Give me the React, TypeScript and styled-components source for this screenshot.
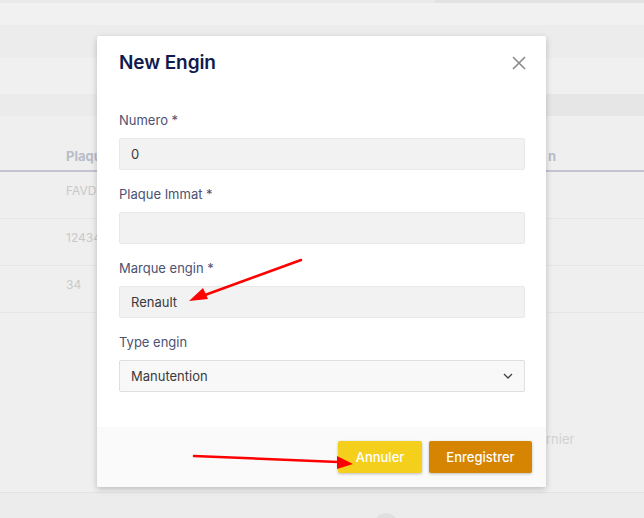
import React from "react";
import styled, { createGlobalStyle } from "styled-components";

const Global = createGlobalStyle`
  html, body { margin: 0; padding: 0; }
  body { font-family: "Inter", "Noto Sans", sans-serif; background: #efefef; }
  * { box-sizing: border-box; }
`;

const Page = styled.div`
  position: relative;
  width: 644px;
  height: 518px;
  overflow: hidden;
  background: #efefef;
  display: flex;
  flex-direction: column;
`;

const Band = styled.div<{ $h: number; $bg: string }>`
  height: ${(p) => p.$h}px;
  background: ${(p) => p.$bg};
  flex: none;
  display: flex;
  justify-content: flex-end;
`;

const BandRight = styled.div<{ $w: number; $bg: string }>`
  width: ${(p) => p.$w}px;
  background: ${(p) => p.$bg};
`;

const Table = styled.div`
  margin-top: 22px;
  display: flex;
  flex-direction: column;
`;

const HeadRow = styled.div`
  height: 34px;
  border-bottom: 2px solid #c3c4d0;
  display: flex;
  align-items: center;
  font-size: 13px;
  font-weight: 700;
  color: #b8bcc8;
  padding: 3px 88px 0 66px;
  justify-content: space-between;
`;

const Row = styled.div`
  height: 47px;
  border-bottom: 1px solid #e6e6e6;
  display: flex;
  align-items: flex-start;
  padding: 11px 0 0 66px;
  font-size: 12px;
  color: #c9c9c9;
`;

const Spacer = styled.div`
  flex: 1;
  position: relative;
`;

const Ghost = styled.div`
  position: absolute;
  left: 546px;
  top: 118px;
  font-size: 13px;
  color: #d2d2d2;
`;

const BottomBar = styled.div`
  height: 26px;
  border-top: 1px solid #e2e2e2;
  background: #ececec;
  position: relative;
  flex: none;
`;

const Knob = styled.div`
  position: absolute;
  left: 374px;
  top: 20px;
  width: 24px;
  height: 24px;
  border-radius: 50%;
  background: #e0e0e0;
`;

const Modal = styled.div`
  position: absolute;
  left: 97px;
  top: 36px;
  width: 449px;
  height: 451px;
  background: #fff;
  border-radius: 2px;
  box-shadow: 0 2px 6px rgba(0, 0, 0, 0.22);
  display: flex;
  flex-direction: column;
`;

const Header = styled.div`
  display: flex;
  align-items: center;
  justify-content: space-between;
  padding: 0 19px 0 22px;
  height: 53px;
  flex: none;
`;

const Title = styled.h2`
  margin: 0;
  font-size: 19px;
  font-weight: 600;
  color: #111a4d;
  letter-spacing: -0.1px;
`;

const Close = styled.button`
  border: 0;
  background: none;
  padding: 0;
  width: 16px;
  height: 16px;
  display: flex;
  cursor: pointer;
`;

const Body = styled.div`
  flex: 1;
  padding: 23px 21px 0 22px;
  display: flex;
  flex-direction: column;
`;

const Field = styled.div`
  display: flex;
  flex-direction: column;
  margin-bottom: 16px;
`;

const Label = styled.label`
  font-size: 13px;
  line-height: 16px;
  color: #4b5273;
  margin-bottom: 10px;
`;

const Input = styled.div<{ $select?: boolean }>`
  height: 32px;
  background: ${(p) => (p.$select ? "#f8f8f8" : "#f2f2f2")};
  border: 1px solid ${(p) => (p.$select ? "#dfdfe3" : "#e8e8e8")};
  border-radius: 2px;
  display: flex;
  align-items: center;
  justify-content: space-between;
  padding: 0 10px 0 11px;
  font-size: 13px;
  color: #3a3a3a;
`;

const Footer = styled.div`
  height: 60px;
  background: #fafafa;
  display: flex;
  align-items: center;
  justify-content: flex-end;
  gap: 7px;
  padding: 0 14px 0 0;
  border-bottom-left-radius: 2px;
  border-bottom-right-radius: 2px;
  flex: none;
`;

const Btn = styled.button<{ $bg: string; $w: number }>`
  width: ${(p) => p.$w}px;
  height: 32px;
  border: 0;
  border-radius: 2px;
  background: ${(p) => p.$bg};
  color: #fff;
  font-family: inherit;
  font-size: 13px;
  font-weight: 500;
  box-shadow: 0 1px 3px rgba(0, 0, 0, 0.25);
  cursor: pointer;
`;

const Arrows = styled.svg`
  position: absolute;
  left: 0;
  top: 0;
  pointer-events: none;
`;

const fields = [
  { label: "Numero *", value: "0" },
  { label: "Plaque Immat *", value: "" },
  { label: "Marque engin *", value: "Renault" },
];

export default function App() {
  return (
    <>
      <Global />
      <Page>
        <Band $h={3} $bg="#e9e9e9">
          <BandRight $w={209} $bg="#e2e2e2" />
        </Band>
        <Band $h={22} $bg="#f1f1f1" />
        <Band $h={33} $bg="#ececec" />
        <Band $h={36} $bg="#f0f0f0" />
        <Band $h={22} $bg="#ebebeb">
          <BandRight $w={100} $bg="#e6e6e6" />
        </Band>
        <Table>
          <HeadRow>
            <span>Plaque</span>
            <span>n</span>
          </HeadRow>
          <Row>FAVD</Row>
          <Row>12434</Row>
          <Row>34</Row>
        </Table>
        <Spacer>
          <Ghost>rnier</Ghost>
        </Spacer>
        <BottomBar>
          <Knob />
        </BottomBar>

        <Modal>
          <Header>
            <Title>New Engin</Title>
            <Close aria-label="close">
              <svg width="16" height="16" viewBox="0 0 16 16">
                <path d="M2 2 L14 14 M14 2 L2 14" stroke="#8a8a8a" strokeWidth="1.6" fill="none" />
              </svg>
            </Close>
          </Header>
          <Body>
            {fields.map((f) => (
              <Field key={f.label}>
                <Label>{f.label}</Label>
                <Input>{f.value}</Input>
              </Field>
            ))}
            <Field>
              <Label>Type engin</Label>
              <Input $select>
                <span>Manutention</span>
                <svg width="12" height="12" viewBox="0 0 12 12">
                  <path d="M2 4 L6 8 L10 4" stroke="#444" strokeWidth="1.3" fill="none" />
                </svg>
              </Input>
            </Field>
          </Body>
          <Footer>
            <Btn $bg="#f4d01c" $w={84}>Annuler</Btn>
            <Btn $bg="#d68502" $w={103}>Enregistrer</Btn>
          </Footer>
        </Modal>

        <Arrows width="644" height="518" viewBox="0 0 644 518">
          <line x1="301" y1="260" x2="205" y2="295" stroke="#f00" strokeWidth="2.5" strokeLinecap="round" />
          <polygon points="189,301 203,288 208,299" fill="#f00" />
          <line x1="194" y1="456" x2="338" y2="462" stroke="#f00" strokeWidth="2.5" strokeLinecap="round" />
          <polygon points="353,464 337,456 337,469" fill="#f00" />
        </Arrows>
      </Page>
    </>
  );
}
